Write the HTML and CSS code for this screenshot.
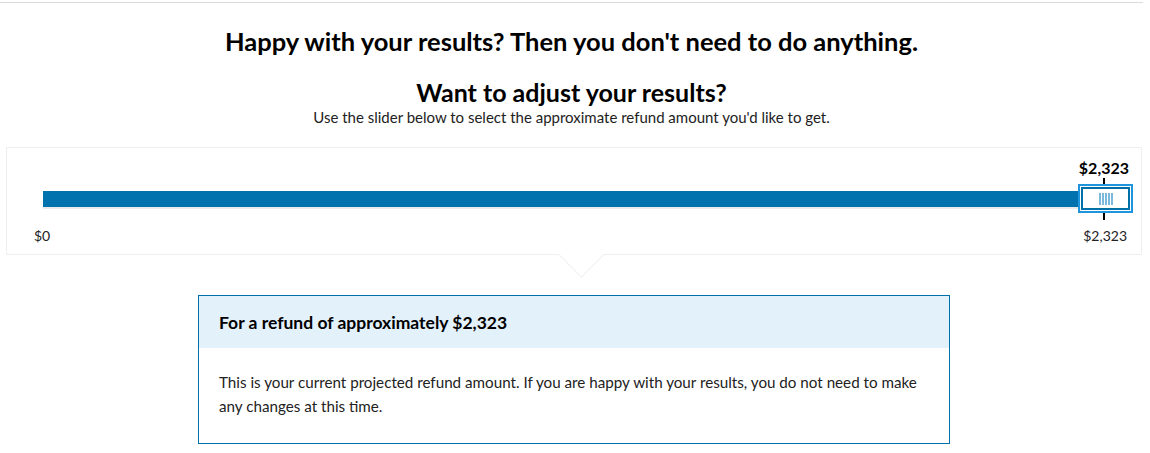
FILE: index.html
```html
<!DOCTYPE html>
<html>
<head>
<meta charset="utf-8">
<link rel="stylesheet" href="styles.css">
</head>
<body>
<div class="page">
  <div class="topline"></div>
  <h1 class="title">Happy with your results? Then you don't need to do anything.</h1>
  <h2 class="subtitle">Want to adjust your results?</h2>
  <p class="hint">Use the slider below to select the approximate refund amount you'd like to get.</p>
  <div class="slider-panel">
    <div class="value-row"><span class="value">$2,323</span></div>
    <div class="track-row">
      <div class="track"></div>
      <div class="handle">
        <span class="tick tick-top"></span>
        <span class="handle-inner"><span class="grip"><i></i><i></i><i></i><i></i><i></i></span></span>
        <span class="tick tick-bottom"></span>
      </div>
    </div>
    <div class="scale-row"><span>$0</span><span>$2,323</span></div>
    <span class="notch"></span>
  </div>
  <div class="card">
    <div class="card-head">For a refund of approximately $2,323</div>
    <div class="card-body">This is your current projected refund amount. If you are happy with your results, you do not need to make any changes at this time.</div>
  </div>
</div>
</body>
</html>
```
FILE: styles.css
```css
html, body { margin: 0; padding: 0; background: #fff; }
body { font-family: "Lato", "Open Sans", sans-serif; color: #000; }
.page { width: 1143px; padding-top: 2px; }
.topline { height: 1px; background: #dcdcdc; }
.title { margin: 23px 0 0; text-align: center; font-size: 25.5px; font-weight: 700; line-height: 30px; }
.subtitle { margin: 21px 0 0; text-align: center; font-size: 25px; font-weight: 700; line-height: 30px; }
.hint { margin: 0; text-align: center; font-size: 15px; line-height: 20px; color: #222; }
.slider-panel { position: relative; margin: 20px 0 0 6px; width: 1134px; height: 106px; border: 1px solid #efefef; }
.value-row { display: flex; justify-content: flex-end; padding: 10px 12px 0 0; height: 20px; }
.value { font-weight: 700; font-size: 16px; line-height: 20px; }
.track-row { position: relative; display: flex; align-items: flex-start; margin: 6px 0 0 36px; width: 1090px; height: 29px; }
.track { flex: 1; margin: 7px 48px 0 0; height: 16px; background: #0073af; border-bottom: 2px solid #ebebeb; }
.handle { position: absolute; right: 0; top: 0; width: 55px; height: 29px; box-sizing: border-box; border: 2px solid #1f95dd; background: #fff; }
.handle-inner { position: absolute; inset: 1px; border: 2px solid #0070a8; display: flex; align-items: center; justify-content: center; }
.grip { display: flex; gap: 1px; height: 12px; margin-left: 1px; }
.grip i { display: block; width: 2px; height: 12px; background: #7ab8de; }
.tick { position: absolute; left: 23px; width: 2px; background: #000; }
.tick-top { top: -8px; height: 6px; }
.tick-bottom { bottom: -9px; height: 7px; }
.scale-row { display: flex; justify-content: space-between; padding: 13px 14px 0 27px; font-size: 14px; line-height: 20px; color: #222; }
.notch { position: absolute; left: 558px; bottom: -17px; width: 32px; height: 32px; background: #fff; border-right: 1px solid #efefef; border-bottom: 1px solid #efefef; transform: rotate(45deg); }
.card { margin: 40px 0 0 198px; width: 750px; border: 1px solid #0070a8; }
.card-head { background: #e3f1fa; height: 52px; padding-left: 20px; display: flex; align-items: center; font-size: 17.5px; font-weight: 700; }
.card-body { padding: 22px 20px 25px; font-size: 15.2px; line-height: 24px; color: #222; }
```
